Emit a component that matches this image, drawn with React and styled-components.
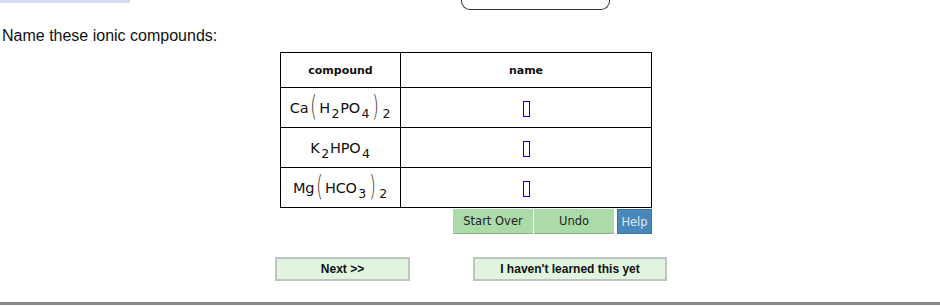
import React from 'react'
import styled, { createGlobalStyle } from 'styled-components'

const GlobalStyle = createGlobalStyle`
  html, body {
    margin: 0;
    padding: 0;
    background: #fff;
    font-family: "Liberation Sans", Arial, sans-serif;
  }
`

const PageStl = styled.div`
  width: 940px;
  height: 306px;
  display: flex;
  flex-direction: column;
  overflow: hidden;
`

const TopStripStl = styled.div`
  display: flex;
  align-items: flex-start;
  height: 11px;
`

const TabBarStl = styled.div`
  width: 130px;
  height: 3px;
  background: #d3def0;
`

const RoundBoxStl = styled.div`
  margin-left: 331px;
  width: 147px;
  height: 9px;
  border: 1.5px solid #333;
  border-top: none;
  border-radius: 0 0 9px 9px;
`

const PromptStl = styled.div`
  margin: 15px 0 0 2px;
  font-size: 16px;
  color: #111;
  line-height: 20px;
`

const WorkAreaStl = styled.div`
  margin: 6px 0 0 280px;
  width: 372px;
  display: flex;
  flex-direction: column;
`

const TableStl = styled.table`
  border-collapse: collapse;
  width: 372px;
  font-family: "DejaVu Sans", Verdana, sans-serif;
  color: #111;

  th, td {
    border: 1.5px solid #000;
    text-align: center;
    padding: 0;
  }
  th {
    height: 34px;
    font-size: 11px;
    font-weight: bold;
  }
  td {
    height: 39px;
  }
`

const FormulaStl = styled.span`
  display: inline-flex;
  align-items: center;
  justify-content: center;
  font-size: 14.5px;
  letter-spacing: -0.2px;
  height: 30px;
`

const SubStl = styled.span`
  font-size: 12.5px;
  position: relative;
  top: 6px;
  margin: 0 1px 0 1.5px;
`

const ParenStl = styled.span`
  font-size: 28px;
  font-weight: 200;
  line-height: 1;
  margin: 0 0 2px;
  transform: scaleX(0.6);
  color: #333;
  font-family: "DejaVu Sans", sans-serif;
`

const SlotStl = styled.span`
  display: inline-block;
  width: 5px;
  height: 14px;
  border: 1.5px solid #00f;
  vertical-align: middle;
`

const ToolRowStl = styled.div`
  display: flex;
  justify-content: flex-end;
  gap: 1px;
  margin-top: 1px;
`

const ToolBtnStl = styled.button`
  width: ${p => p.w}px;
  height: 25px;
  margin-left: ${p => p.gap || 0}px;
  padding: 0;
  border: none;
  border-bottom: 1px solid #8ab88a;
  background: ${p => p.blue ? '#4a87b9' : '#abdba9'};
  color: ${p => p.blue ? '#dce8f4' : '#222'};
  font-family: "DejaVu Sans", Verdana, sans-serif;
  font-size: 11.5px;
  ${p => p.blue && 'border: 1px solid #3a74a4;'}
`

const ActionRowStl = styled.div`
  display: flex;
  margin: 23px 0 0 275px;
  gap: 63px;
`

const ActionBtnStl = styled.button`
  width: ${p => p.w}px;
  height: 24px;
  padding: 0;
  background: #e0f4e0;
  border: 2px solid #bcc6bc;
  font-family: "Liberation Sans", Arial, sans-serif;
  font-size: 12px;
  font-weight: bold;
  color: #111;
`

const RuleStl = styled.div`
  margin-top: 21px;
  height: 3px;
  background: #8a8a8a;
`

const Formula = ({ parts }) => (
  <FormulaStl>
    {parts.map((p, i) => {
      if (p.sub) return <SubStl key={i}>{p.sub}</SubStl>
      if (p.paren) return <ParenStl key={i}>{p.paren}</ParenStl>
      return <span key={i}>{p.t}</span>
    })}
  </FormulaStl>
)

const rows = [
  [{ t: 'Ca' }, { paren: '(' }, { t: 'H' }, { sub: '2' }, { t: 'PO' }, { sub: '4' }, { paren: ')' }, { sub: '2' }],
  [{ t: 'K' }, { sub: '2' }, { t: 'HPO' }, { sub: '4' }],
  [{ t: 'Mg' }, { paren: '(' }, { t: 'HCO' }, { sub: '3' }, { paren: ')' }, { sub: '2' }],
]

export default function App() {
  return (
    <PageStl>
      <GlobalStyle />
      <TopStripStl>
        <TabBarStl />
        <RoundBoxStl />
      </TopStripStl>
      <PromptStl>Name these ionic compounds:</PromptStl>
      <WorkAreaStl>
        <TableStl>
          <colgroup>
            <col style={{ width: 120 }} />
            <col />
          </colgroup>
          <thead>
            <tr><th>compound</th><th>name</th></tr>
          </thead>
          <tbody>
            {rows.map((r, i) => (
              <tr key={i}>
                <td><Formula parts={r} /></td>
                <td><SlotStl /></td>
              </tr>
            ))}
          </tbody>
        </TableStl>
        <ToolRowStl>
          <ToolBtnStl w={80}>Start Over</ToolBtnStl>
          <ToolBtnStl w={80}>Undo</ToolBtnStl>
          <ToolBtnStl w={35} gap={2} blue>Help</ToolBtnStl>
        </ToolRowStl>
      </WorkAreaStl>
      <ActionRowStl>
        <ActionBtnStl w={135}>Next &gt;&gt;</ActionBtnStl>
        <ActionBtnStl w={194}>I haven't learned this yet</ActionBtnStl>
      </ActionRowStl>
      <RuleStl />
    </PageStl>
  )
}
